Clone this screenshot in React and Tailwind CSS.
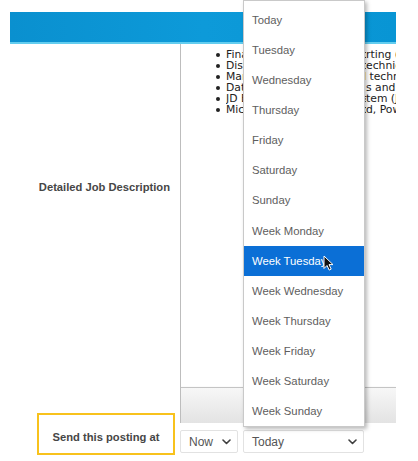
import React from 'react'

const days = [
  'Today',
  'Tuesday',
  'Wednesday',
  'Thursday',
  'Friday',
  'Saturday',
  'Sunday',
  'Week Monday',
  'Week Tuesday',
  'Week Wednesday',
  'Week Thursday',
  'Week Friday',
  'Week Saturday',
  'Week Sunday'
]

const duties = [
  { lead: 'Financial planning and repo', tail: 'rting (FP&A)' },
  { lead: 'Distributes and supports t', tail: 'echnical' },
  { lead: 'Manages and maintains all', tail: ' technical' },
  { lead: 'Data analysis, metric', tail: 's and reports' },
  { lead: 'JD Edwards Enterprise Sys', tail: 'tem (JDE)' },
  { lead: 'Microsoft Office: Excel, Wor', tail: 'd, PowerPoint' }
]

const Chevron = () => (
  <svg width="9" height="6" viewBox="0 0 9 6" fill="none">
    <path d="M1 1l3.5 3.5L8 1" stroke="#3f3f3f" strokeWidth="1.6" strokeLinecap="round" strokeLinejoin="round" />
  </svg>
)

const Cursor = () => (
  <svg width="11" height="16" viewBox="0 0 11 16">
    <path d="M1 1v12.5l3-3 2.2 4.6 2-1-2.2-4.5H10L1 1z" fill="#111" stroke="#fff" strokeWidth="1" strokeLinejoin="round" />
  </svg>
)

export default function App() {
  return (
    <div
      className="relative w-[418px] h-[461px] overflow-hidden bg-white"
      style={{ fontFamily: '"Liberation Sans", Arial, sans-serif' }}
    >
      {/* Header bar */}
      <div className="pt-[12px] pl-[10px]">
        <div className="w-[386px] h-[32px] bg-linear-to-r from-[#0a90cf] via-[#0d9ad9] to-[#0895d4] border-b-2 border-[#63cdef]" />
      </div>

      <div className="flex">
        {/* Labels */}
        <div className="w-[180px] h-[411px] flex flex-col">
          <div className="pt-[136px] pr-[10px] text-right text-[11.2px] font-bold text-[#464646] leading-[14px]">
            Detailed Job Description
          </div>
          <div className="mt-auto ml-[37px] w-[138px] h-[42px] border-2 border-[#f8c21c] flex items-end justify-center pb-[7px] text-[11.2px] font-bold text-[#464646]">
            Send this posting at
          </div>
        </div>

        {/* Editor + selects */}
        <div className="w-[216px]">
          <div className="h-[379px] border-l border-[#bdbdbd] flex flex-col overflow-hidden">
            <ul
              className="pt-[5px] pl-[35px] text-[10.8px] leading-[11px] text-[#222] flex-1"
              style={{ fontFamily: '"DejaVu Sans", Verdana, sans-serif' }}
            >
              {duties.map((d) => (
                <li key={d.lead} className="flex items-center whitespace-nowrap">
                  <span className="shrink-0 w-[4px] h-[4px] rounded-full bg-[#222] mr-[6px]" />
                  <span className="shrink-0 inline-block w-[140px] overflow-hidden">{d.lead}</span>
                  <span className="shrink-0 whitespace-pre">{d.tail}</span>
                </li>
              ))}
            </ul>
            <div className="h-[36px] border-t border-[#c4c4c4] bg-linear-to-b from-[#f7f7f7] to-[#e3e3e3] shadow-[0_1px_2px_rgba(0,0,0,0.25)]" />
          </div>

          <div className="mt-[7px] flex gap-[5px] text-[12px] text-[#555]">
            <div className="w-[58px] h-[23px] border border-[#e2e2e2] rounded-[2px] flex items-center justify-between pl-[8px] pr-[6px]">
              <span>Now</span>
              <Chevron />
            </div>
            <div className="w-[121px] h-[23px] border border-[#e2e2e2] rounded-[2px] flex items-center justify-between pl-[8px] pr-[6px]">
              <span>Today</span>
              <Chevron />
            </div>
          </div>
        </div>
      </div>

      {/* Open dropdown menu */}
      <div className="absolute left-[243px] top-0 w-[122px] h-[427px] bg-white border border-[#c9c9c9] shadow-[2px_2px_4px_rgba(0,0,0,0.28)] pt-[4px]">
        {days.map((day) => (
          <div
            key={day}
            className={
              day === 'Week Tuesday'
                ? 'relative h-[30.15px] flex items-center pl-[8px] text-[11.3px] bg-[#0b6fd6] text-white'
                : 'h-[30.15px] flex items-center pl-[8px] text-[11.3px] text-[#5e5e5e]'
            }
          >
            {day}
            {day === 'Week Tuesday' && (
              <span className="absolute left-[79px] top-[9px]">
                <Cursor />
              </span>
            )}
          </div>
        ))}
      </div>
    </div>
  )
}
